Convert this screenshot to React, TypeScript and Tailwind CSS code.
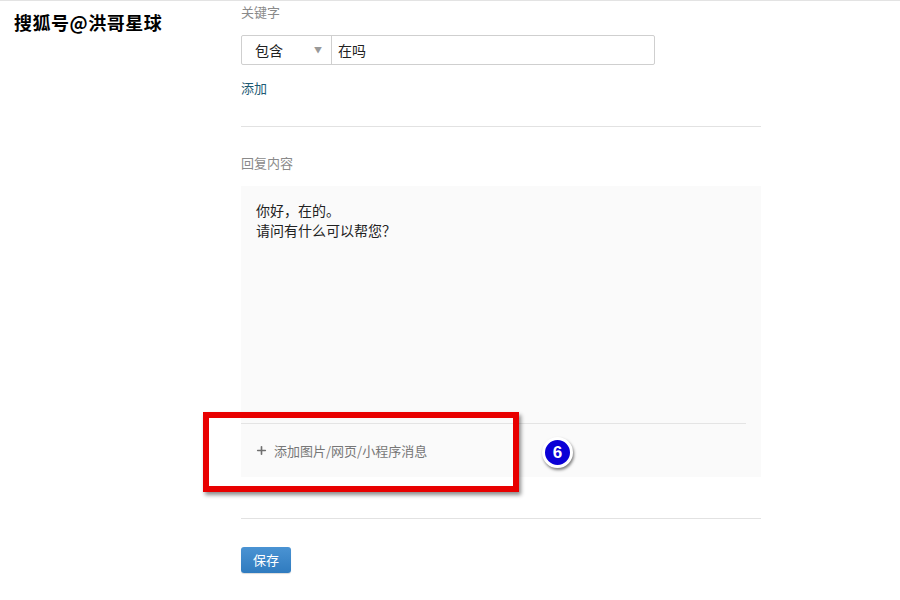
import { Plus } from "lucide-react"

export default function App() {
  return (
    <div className="relative w-[900px] h-[600px] overflow-hidden bg-white border-t border-[#e3e3e3] font-['Noto_Sans_CJK_SC','Noto_Sans',sans-serif] text-[13px]">
      {/* Watermark */}
      <div className="absolute left-[14px] top-[8px] text-[18px] font-bold text-black tracking-[0.5px] [text-shadow:0_0_2px_#fff,0_0_2px_#fff]">
        搜狐号@洪哥星球
      </div>

      <div className="ml-[241px] w-[520px]">
        <div className="pt-[2px] h-[34px] leading-[18px] text-[#8a8a8a]">关键字</div>

        {/* Keyword row */}
        <div className="flex h-[30px] w-[414px] border border-[#cfcfcf] rounded-[2px] text-[14px] text-[#222]">
          <div className="w-[90px] flex items-center justify-between pl-[13px] pr-[9px] border-r border-[#cfcfcf]">
            <span>包含</span>
            <span className="text-[8px] text-[#999]">▼</span>
          </div>
          <div className="flex-1 flex items-center pl-[6px]">在吗</div>
        </div>

        <div className="mt-[13px] leading-[20px] text-[#1e5a73]">添加</div>

        <div className="mt-[28px] border-t border-[#e2e2e2]" />

        <div className="mt-[27px] leading-[18px] text-[#8a8a8a]">回复内容</div>

        {/* Reply box */}
        <div className="mt-[14px] bg-[#fafafa]">
          <div className="h-[237px] px-[15px] pt-[14px] text-[14px] leading-[20px] text-[#222]">
            <div>你好，在的。</div>
            <div>请问有什么可以帮您？</div>
          </div>
          <div className="mr-[15px] border-t border-[#e4e4e4]" />
          <div className="h-[53px] flex items-center gap-[6px] pl-[14px] text-[#777]">
            <Plus className="w-[13px] h-[13px] text-[#6f6f6f]" strokeWidth={3} />
            <span>添加图片/网页/小程序消息</span>
          </div>
        </div>

        <div className="mt-[41px] border-t border-[#e2e2e2]" />

        <button
          type="button"
          className="mt-[28px] w-[50px] h-[26px] rounded-[3px] bg-gradient-to-b from-[#4a93d3] to-[#2f7bbf] text-white text-[13px] shadow-[0_1px_1px_rgba(0,0,0,0.15)]"
        >
          保存
        </button>
      </div>

      {/* Annotation: red frame */}
      <div className="absolute left-[203px] top-[411px] w-[316px] h-[80px] border-[6px] border-[#e80000] shadow-[2px_3px_4px_rgba(0,0,0,0.45)]" />

      {/* Annotation: numbered badge */}
      <div className="absolute left-[542px] top-[436px] w-[31px] h-[31px] rounded-full bg-[#0a00d6] border-[3px] border-white shadow-[1px_2px_3px_rgba(0,0,0,0.5)] flex items-center justify-center text-white font-bold text-[17px] leading-none font-['Liberation_Sans',sans-serif]">
        6
      </div>
    </div>
  )
}
